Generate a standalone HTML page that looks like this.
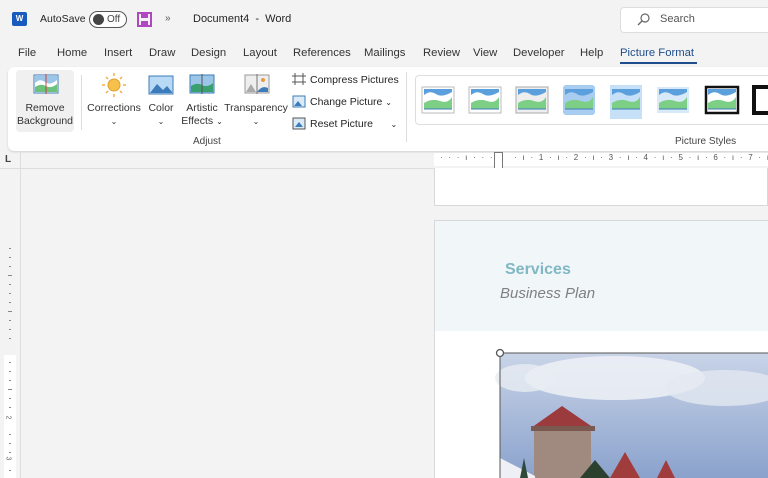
<!DOCTYPE html>
<html><head><meta charset="utf-8"><style>
*{margin:0;padding:0;box-sizing:border-box}
body{width:768px;height:478px;overflow:hidden;background:#f3f3f3;font-family:"Liberation Sans",sans-serif;position:relative;color:#242424}
.a{position:absolute;white-space:nowrap}
.t{font-size:10.5px}
.tab{position:absolute;top:47px;font-size:11.3px;color:#333}
.lbl{font-size:10.5px;text-align:center;color:#333;position:absolute;line-height:13px}
.vt{position:absolute;left:9px;width:2px;height:1px;background:#888}
</style></head><body>
<!-- title bar -->
<div class="a" style="left:12px;top:12px;width:15px;height:14px;background:#185abd;border-radius:2px;color:#fff;font-size:8px;font-weight:bold;text-align:center;line-height:14px">W</div>
<div class="a" style="left:40px;top:13px;font-size:10.5px">AutoSave</div>
<div class="a" style="left:89px;top:11px;width:38px;height:17px;border:1px solid #555;border-radius:9px;background:#fff"></div>
<div class="a" style="left:93px;top:14px;width:11px;height:11px;border-radius:50%;background:#444"></div>
<div class="a t" style="left:107px;top:14px;font-size:10px;color:#444">Off</div>
<svg class="a" style="left:137px;top:12px" width="15" height="15"><rect x="1" y="1" width="13" height="13" fill="none" stroke="#b146c2" stroke-width="2"/><rect x="4" y="1" width="7" height="5" fill="#b146c2"/><rect x="4" y="9" width="7" height="4" fill="#b146c2"/></svg>
<div class="a t" style="left:165px;top:13px;font-size:10px;color:#555">»</div>
<div class="a" style="left:193px;top:13px;font-size:11px">Document4 &nbsp;-&nbsp; Word</div>
<div class="a" style="left:620px;top:7px;width:160px;height:26px;background:#fff;border:1px solid #ddd;border-radius:4px"></div>
<svg class="a" style="left:637px;top:13px" width="13" height="13"><circle cx="8" cy="5" r="4" fill="none" stroke="#666" stroke-width="1.2"/><line x1="5" y1="8" x2="1" y2="12" stroke="#666" stroke-width="1.3"/></svg>
<div class="a" style="left:660px;top:13px;font-size:11px;color:#555">Search</div>
<!-- tabs -->
<div class="tab" style="left:18px">File</div>
<div class="tab" style="left:57px">Home</div>
<div class="tab" style="left:104px">Insert</div>
<div class="tab" style="left:149px">Draw</div>
<div class="tab" style="left:191px">Design</div>
<div class="tab" style="left:243px">Layout</div>
<div class="tab" style="left:293px">References</div>
<div class="tab" style="left:364px">Mailings</div>
<div class="tab" style="left:423px">Review</div>
<div class="tab" style="left:473px">View</div>
<div class="tab" style="left:513px">Developer</div>
<div class="tab" style="left:580px">Help</div>
<div class="tab" style="left:620px;color:#1e4e8c">Picture Format</div>
<div class="a" style="left:620px;top:62px;width:77px;height:2px;background:#1e4e8c"></div>
<!-- ribbon -->
<div class="a" style="left:8px;top:67px;width:780px;height:84px;background:#fff;border-radius:6px;box-shadow:0 1px 2px rgba(0,0,0,.15)"></div>
<div class="a" style="left:16px;top:70px;width:58px;height:62px;background:#f0f0f0;border-radius:4px"></div>
<svg class="a" style="left:33px;top:74px" width="26" height="20"><rect x="1" y="1" width="24" height="18" fill="#fff" stroke="#3c7cba"/><path d="M2 9 Q7 4 12 8 T24 6 V2 H2Z" fill="#9cc6e8"/><path d="M2 18 V13 Q8 9 13 12 T24 10 V18Z" fill="#6cc27a"/><line x1="13" y1="0" x2="13" y2="20" stroke="#c44" stroke-width="1"/></svg>
<div class="lbl" style="left:14px;top:102px;width:62px">Remove<br>Background</div>
<div class="a" style="left:81px;top:75px;width:1px;height:55px;background:#ddd"></div>
<svg class="a" style="left:101px;top:72px" width="26" height="26"><circle cx="13" cy="13" r="6" fill="#f6c04a" stroke="#e0a030"/><g stroke="#f0b040" stroke-width="1.5"><line x1="13" y1="1" x2="13" y2="4"/><line x1="13" y1="22" x2="13" y2="25"/><line x1="1" y1="13" x2="4" y2="13"/><line x1="22" y1="13" x2="25" y2="13"/><line x1="5" y1="5" x2="7" y2="7"/><line x1="19" y1="19" x2="21" y2="21"/><line x1="5" y1="21" x2="7" y2="19"/><line x1="19" y1="7" x2="21" y2="5"/></g></svg>
<div class="lbl" style="left:84px;top:102px;width:60px">Corrections<br><span style="font-size:8px">⌄</span></div>
<svg class="a" style="left:148px;top:75px" width="26" height="20"><rect x="1" y="1" width="24" height="18" fill="#b9daf5" stroke="#3c7cba"/><path d="M2 18 L9 9 L15 15 L19 11 L24 17 V18Z" fill="#3c7cba"/></svg>
<div class="lbl" style="left:144px;top:102px;width:34px">Color<br><span style="font-size:8px">⌄</span></div>
<svg class="a" style="left:189px;top:74px" width="26" height="20"><rect x="1" y="1" width="24" height="18" fill="#9cc6e8" stroke="#3c7cba"/><path d="M2 18 V12 Q8 8 13 11 T24 9 V18Z" fill="#3aa070"/><line x1="13" y1="0" x2="13" y2="20" stroke="#555"/></svg>
<div class="lbl" style="left:180px;top:102px;width:44px">Artistic<br>Effects <span style="font-size:8px">⌄</span></div>
<svg class="a" style="left:244px;top:74px" width="26" height="20"><rect x="1" y="1" width="24" height="18" fill="#eee" stroke="#999"/><path d="M2 18 L7 10 L12 18Z" fill="#aaa"/><path d="M13 18 Q18 11 24 14 V18Z" fill="#3c7cba"/><circle cx="19" cy="6" r="2" fill="#e89a40"/><line x1="13" y1="0" x2="13" y2="20" stroke="#777"/></svg>
<div class="lbl" style="left:224px;top:102px;width:64px">Transparency<br><span style="font-size:8px">⌄</span></div>
<svg class="a" style="left:292px;top:73px" width="14" height="12"><rect x="3" y="3" width="8" height="6" fill="none" stroke="#555"/><path d="M0 3H3V0M14 3H11V0M0 9H3V12M14 9H11V12" fill="none" stroke="#555"/></svg>
<div class="a t" style="left:310px;top:74px">Compress Pictures</div>
<svg class="a" style="left:292px;top:95px" width="14" height="13"><rect x="1" y="1" width="12" height="11" fill="#dbeaf7" stroke="#3c7cba"/><path d="M2 11 L6 6 L10 11Z" fill="#3c7cba"/></svg>
<div class="a t" style="left:310px;top:96px">Change Picture <span style="font-size:8px">⌄</span></div>
<svg class="a" style="left:292px;top:117px" width="14" height="13"><rect x="1" y="1" width="12" height="11" fill="#dbeaf7" stroke="#555"/><path d="M3 10 L7 5 L11 10Z" fill="#3c7cba"/></svg>
<div class="a t" style="left:310px;top:118px">Reset Picture &nbsp;&nbsp;&nbsp;&nbsp;&nbsp;<span style="font-size:8px">⌄</span></div>
<div class="a t" style="left:193px;top:136px;font-size:10px;color:#444">Adjust</div>
<div class="a" style="left:406px;top:72px;width:1px;height:70px;background:#ddd"></div>
<div class="a" style="left:415px;top:75px;width:370px;height:50px;border:1px solid #ddd;border-radius:4px;background:#fff"></div>
<svg class="a" style="left:420px;top:85px" width="348" height="35">
<defs><g id="p"><path d="M2 8 Q8 3 14 7 T30 5 V2 H2Z" fill="#5ba0dd"/><path d="M2 22 V16 Q10 11 18 14 T30 10 V22Z" fill="#7ccf84"/><line x1="2" y1="22" x2="30" y2="22" stroke="#3c7cba"/></g></defs>
<rect x="2" y="2" width="32" height="26" fill="#fff" stroke="#bbb"/><use href="#p" x="2" y="2"/>
<rect x="49" y="2" width="32" height="26" fill="#fff" stroke="#bbb"/><use href="#p" x="49" y="2"/>
<rect x="96" y="2" width="32" height="26" fill="#eee" stroke="#aaa"/><use href="#p" x="96" y="2"/>
<rect x="143" y="0" width="32" height="30" rx="3" fill="#a8cdf0"/><use href="#p" x="143" y="2"/>
<rect x="190" y="0" width="32" height="34" fill="#c5e0f7"/><use href="#p" x="190" y="2"/>
<rect x="237" y="2" width="32" height="26" fill="#d8e9f8"/><use href="#p" x="237" y="2"/>
<rect x="286" y="2" width="32" height="26" fill="#fff" stroke="#111" stroke-width="2.5"/><use href="#p" x="286" y="2"/>
<rect x="334" y="2" width="32" height="26" fill="#fff" stroke="#111" stroke-width="4"/>
</svg>
<div class="a t" style="left:675px;top:136px;font-size:10px;color:#444">Picture Styles</div>
<!-- rulers -->
<div class="a" style="left:5px;top:154px;font-size:10px;font-weight:bold;color:#444">L</div>
<div class="a" style="left:20px;top:152px;width:1px;height:326px;background:#ddd"></div>
<div class="a" style="left:0;top:168px;width:768px;height:1px;background:#ddd"></div>
<div class="a" style="left:434px;top:153px;width:334px;height:13px;background:#fff"></div>
<div class="a" style="left:440px;top:153px;font-size:8px;color:#555;letter-spacing:1.75px">· · · ı · · ·&nbsp;&nbsp;&nbsp;&nbsp; · ı · 1 · ı · 2 · ı · 3 · ı · 4 · ı · 5 · ı · 6 · ı · 7 · ı</div>
<div class="a" style="left:494px;top:152px;width:9px;height:17px;border:1px solid #777;background:#fff"></div>
<div class="a" style="left:4px;top:355px;width:12px;height:123px;background:#fff"></div>
<div class="vt" style="top:248px"></div><div class="vt" style="top:257px"></div><div class="vt" style="top:266px"></div><div class="vt" style="top:275px;left:8px;width:4px"></div><div class="vt" style="top:284px"></div><div class="vt" style="top:293px"></div><div class="vt" style="top:302px"></div><div class="vt" style="top:311px;left:8px;width:4px"></div><div class="vt" style="top:320px"></div><div class="vt" style="top:329px"></div><div class="vt" style="top:338px"></div>
<div class="vt" style="top:362px"></div><div class="vt" style="top:371px"></div><div class="vt" style="top:380px"></div><div class="vt" style="top:389px;left:8px;width:4px"></div><div class="vt" style="top:398px"></div><div class="vt" style="top:407px"></div><div class="vt" style="top:434px"></div><div class="vt" style="top:443px"></div><div class="vt" style="top:452px"></div><div class="vt" style="top:470px"></div>
<div class="a" style="left:6px;top:414px;font-size:7px;color:#666;transform:rotate(90deg)">2</div>
<div class="a" style="left:6px;top:455px;font-size:7px;color:#666;transform:rotate(90deg)">3</div>
<!-- page -->
<div class="a" style="left:434px;top:168px;width:334px;height:38px;background:#fff;border:1px solid #d8d8d8;border-top:none"></div>
<div class="a" style="left:434px;top:220px;width:334px;height:258px;background:#fff;border-left:1px solid #d8d8d8;border-top:1px solid #d8d8d8"></div>
<div class="a" style="left:435px;top:221px;width:333px;height:110px;background:#f1f6f9"></div>
<div class="a" style="left:505px;top:261px;font-size:16px;font-weight:bold;color:#7fb8c4">Services</div>
<div class="a" style="left:500px;top:285px;font-size:15px;font-style:italic;color:#808080">Business Plan</div>
<svg class="a" style="left:495px;top:348px" width="273" height="130">
<defs><linearGradient id="s" x1="0" y1="0" x2="0" y2="1"><stop offset="0" stop-color="#c9d4e8"/><stop offset="1" stop-color="#8aa2cc"/></linearGradient></defs>
<rect x="5" y="5" width="268" height="125" fill="url(#s)"/>
<ellipse cx="120" cy="30" rx="90" ry="22" fill="#eef1f6" opacity=".85"/>
<ellipse cx="230" cy="40" rx="60" ry="18" fill="#e3e8f1" opacity=".8"/>
<ellipse cx="30" cy="30" rx="30" ry="14" fill="#e8ecf3" opacity=".8"/>
<path d="M39 130 V80 H96 V130Z" fill="#a08a80"/>
<path d="M36 80 L67 58 L99 80Z" fill="#9b3b3e"/>
<rect x="36" y="78" width="64" height="5" fill="#7a5a50"/>
<path d="M115 130 L130 104 L145 130Z" fill="#a13c3c"/>
<path d="M162 130 L171 112 L180 130Z" fill="#a13c3c"/>
<path d="M5 110 L40 128 V130 H5Z" fill="#eef0f5"/>
<path d="M25 130 L29 110 L33 130Z" fill="#2f4a3a"/>
<path d="M85 130 L100 112 L115 130Z" fill="#2c4030"/>
<line x1="5" y1="5" x2="273" y2="5" stroke="#555"/><line x1="5" y1="5" x2="5" y2="130" stroke="#555"/>
<circle cx="5" cy="5" r="3.5" fill="#fff" stroke="#555" stroke-width="1.3"/>
</svg>
</body></html>
